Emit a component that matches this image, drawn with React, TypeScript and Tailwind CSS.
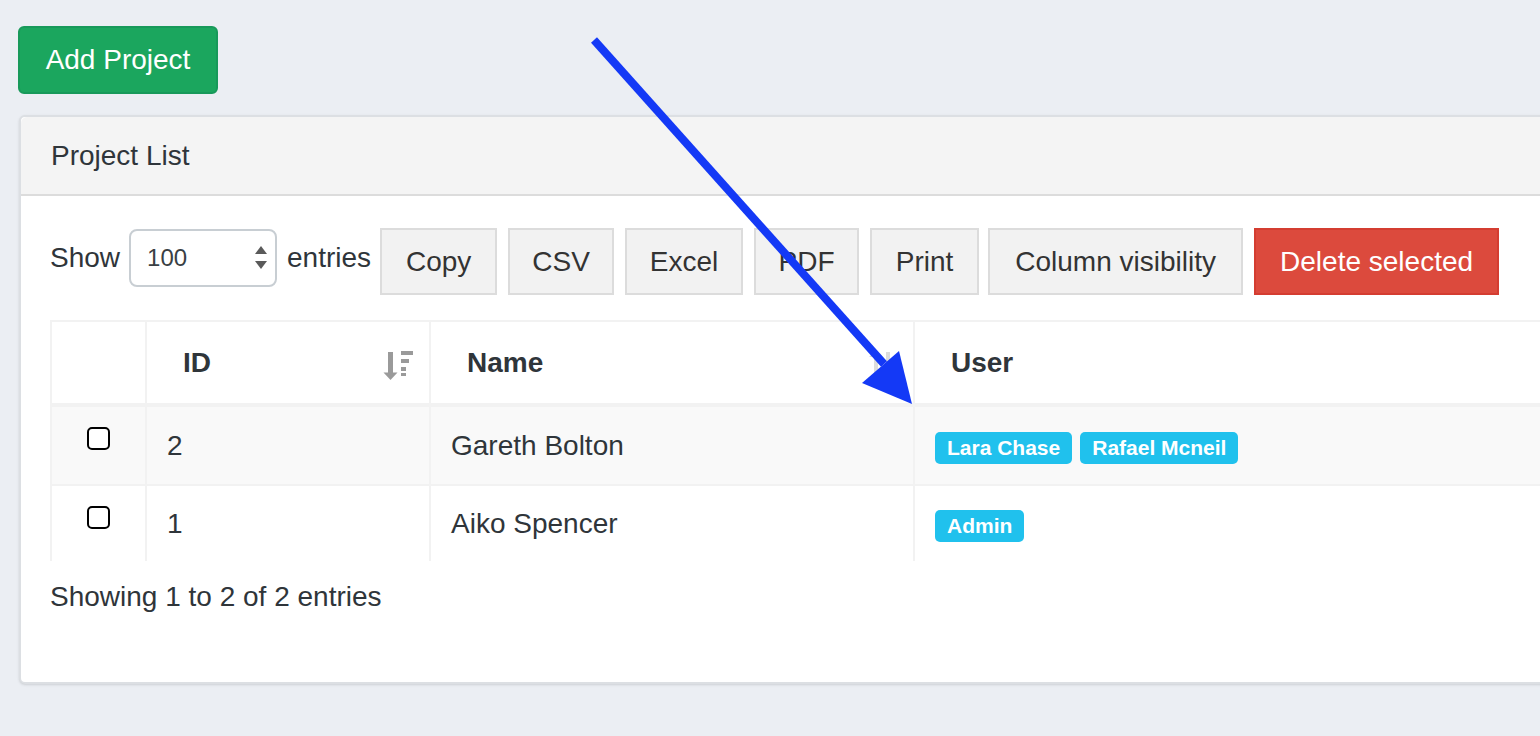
import React from 'react';

type Project = { id: number; name: string; users: string[] };

const projects: Project[] = [
  { id: 2, name: 'Gareth Bolton', users: ['Lara Chase', 'Rafael Mcneil'] },
  { id: 1, name: 'Aiko Spencer', users: ['Admin'] },
];

const SortDesc = () => (
  <svg width="32" height="32" viewBox="0 0 32 32" className="absolute right-[15px] top-[28px]">
    <rect x="6" y="2" width="5" height="21" fill="#9a9a9a" />
    <polygon points="1.5,22.5 15.5,22.5 8.5,30" fill="#9a9a9a" />
    <rect x="19" y="1" width="12" height="4" fill="#9a9a9a" />
    <rect x="19" y="9" width="8" height="4" fill="#9a9a9a" />
    <rect x="19" y="17" width="5" height="4" fill="#9a9a9a" />
    <rect x="19" y="23" width="5" height="3" fill="#9a9a9a" />
  </svg>
);

const SortBoth = () => (
  <svg width="26" height="32" viewBox="0 0 26 32" className="absolute right-[18px] top-[26px]">
    <rect x="5" y="8" width="4" height="20" fill="#dcdcdc" />
    <polygon points="0,9 14,9 7,2" fill="#dcdcdc" />
    <rect x="17" y="4" width="4" height="20" fill="#dcdcdc" />
    <polygon points="12,23 26,23 19,30" fill="#dcdcdc" />
  </svg>
);

const Checkbox = () => (
  <span className="block w-[23px] h-[23px] mx-auto border-2 border-black rounded-[5px] bg-white" />
);

const Badge = ({ label }: { label: string }) => (
  <span className="inline-block bg-[#20c1ed] text-white font-bold text-[21px] leading-[32px] px-3 rounded-[5px] mr-2">
    {label}
  </span>
);

export default function App() {
  return (
    <div
      className="relative w-[1540px] h-[736px] overflow-hidden bg-[#ebeef3] text-[#2f353a]"
      style={{ fontFamily: '"Liberation Sans", Arial, sans-serif' }}
    >
      <div className="pl-[18px] pt-[26px]">
        <button className="h-[68px] w-[200px] bg-[#1ba65e] border-2 border-[#18995a] rounded-[6px] text-white text-[28px]">
          Add Project
        </button>

        <div className="mt-[21px] ml-px w-[1600px] bg-white border-2 border-[#dcdfe3] rounded-[6px] shadow-sm">
          <div className="h-[79px] flex items-center px-[30px] bg-[#f4f4f4] border-b-2 border-[#dcdcdc] rounded-t-[6px] text-[28px]">
            Project List
          </div>

          <div className="pt-[32px] pl-[29px] pr-[29px] pb-[64px]">
            {/* toolbar */}
            <div className="flex items-start">
              <div className="flex items-center h-[58px] mt-px text-[28px]">
                <span>Show</span>
                <div className="relative ml-[9px] w-[148px] h-[58px] border-2 border-[#c8ced3] rounded-[8px] bg-white flex items-center pl-4 text-[24px] text-[#3a3f44]">
                  100
                  <svg width="12" height="26" viewBox="0 0 12 26" className="absolute right-[8px] top-[14px]">
                    <polygon points="0,9 12,9 6,1" fill="#5a5a5a" />
                    <polygon points="0,16 12,16 6,24" fill="#5a5a5a" />
                  </svg>
                </div>
                <span className="ml-[10px]">entries</span>
              </div>
              <div className="flex gap-[11px] ml-[9px] text-[28px] text-[#333]">
                <button className="h-[67px] w-[117px] bg-[#f2f2f2] border-2 border-[#dcdcdc]">Copy</button>
                <button className="h-[67px] w-[106px] bg-[#f2f2f2] border-2 border-[#dcdcdc]">CSV</button>
                <button className="h-[67px] w-[118px] bg-[#f2f2f2] border-2 border-[#dcdcdc]">Excel</button>
                <button className="h-[67px] w-[105px] bg-[#f2f2f2] border-2 border-[#dcdcdc]">PDF</button>
                <button className="h-[67px] w-[109px] bg-[#f2f2f2] border-2 border-[#dcdcdc]">Print</button>
                <button className="h-[67px] w-[255px] -ml-[2px] bg-[#f2f2f2] border-2 border-[#dcdcdc]">Column visibility</button>
                <button className="h-[67px] w-[245px] bg-[#dc4a3d] border-2 border-[#d43d31] text-white">Delete selected</button>
              </div>
            </div>

            {/* table */}
            <table className="mt-[25px] w-full table-fixed border-collapse text-[28px]">
              <colgroup>
                <col className="w-[95px]" />
                <col className="w-[284px]" />
                <col className="w-[484px]" />
                <col />
              </colgroup>
              <thead>
                <tr className="h-[84px]">
                  <th className="border-2 border-b-4 border-[#f2f2f2]" />
                  <th className="relative border-2 border-b-4 border-[#f2f2f2] text-left font-bold pl-[36px]">
                    ID
                    <SortDesc />
                  </th>
                  <th className="relative border-2 border-b-4 border-[#f2f2f2] text-left font-bold pl-[36px]">
                    Name
                    <SortBoth />
                  </th>
                  <th className="border-2 border-b-4 border-[#f2f2f2] text-left font-bold pl-[36px]">User</th>
                </tr>
              </thead>
              <tbody>
                {projects.map((p, i) => (
                  <tr key={p.id} className={i === 0 ? 'h-[80px] bg-[#f9f9f9]' : 'h-[76px] bg-white'}>
                    <td className={`border-x-2 border-[#f2f2f2] align-top pt-[20px] ${i === 0 ? 'border-b-2' : ''}`}>
                      <Checkbox />
                    </td>
                    <td className={`border-x-2 border-[#f2f2f2] pl-[20px] ${i === 0 ? 'border-b-2' : ''}`}>{p.id}</td>
                    <td className={`border-x-2 border-[#f2f2f2] pl-[20px] ${i === 0 ? 'border-b-2' : ''}`}>{p.name}</td>
                    <td className={`border-x-2 border-[#f2f2f2] pl-[20px] ${i === 0 ? 'border-b-2' : ''}`}>
                      {p.users.map((u) => (
                        <Badge key={u} label={u} />
                      ))}
                    </td>
                  </tr>
                ))}
              </tbody>
            </table>

            <div className="mt-[15px] text-[28px] leading-[42px]">Showing 1 to 2 of 2 entries</div>
          </div>
        </div>
      </div>

      {/* annotation arrow */}
      <svg className="absolute inset-0 pointer-events-none" width="1540" height="736" viewBox="0 0 1540 736">
        <line x1="594" y1="40" x2="884" y2="364" stroke="#1439f6" strokeWidth="8" />
        <polygon points="912,404 862,383 899,351" fill="#1439f6" />
      </svg>
    </div>
  );
}
